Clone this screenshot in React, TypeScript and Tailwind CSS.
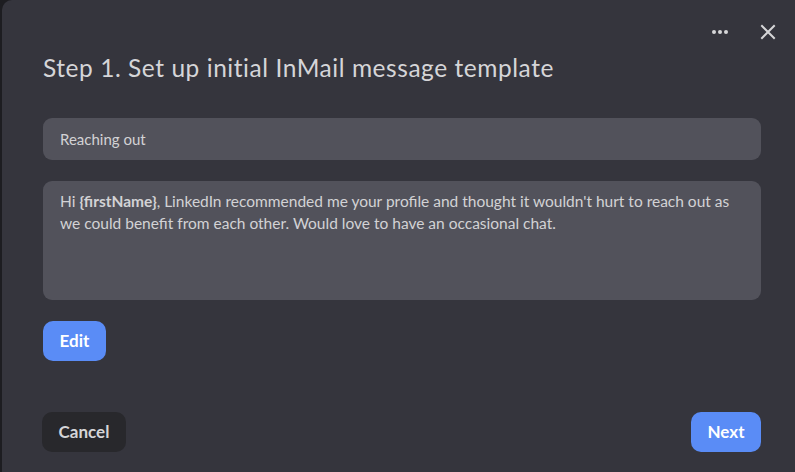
import React from "react";

// Icons
const DotsIcon = () => (
  <svg width="18" height="6" viewBox="0 0 18 6" fill="#d6d6d8">
    <circle cx="3" cy="3" r="2" />
    <circle cx="9" cy="3" r="2" />
    <circle cx="15" cy="3" r="2" />
  </svg>
);

const CloseIcon = () => (
  <svg width="16" height="16" viewBox="0 0 16 16" stroke="#d6d6d8" strokeWidth="2" strokeLinecap="square">
    <path d="M2 2 L14 14 M14 2 L2 14" />
  </svg>
);

const Button = ({
  label,
  className,
}: {
  label: string;
  className: string;
}) => (
  <button
    className={`h-[40px] rounded-[10px] text-[17px] font-bold ${className}`}
  >
    {label}
  </button>
);

export default function App() {
  return (
    <div
      className="w-[795px] h-[472px] bg-[#1d1d21] overflow-hidden"
      style={{ fontFamily: "Lato, 'Noto Sans', sans-serif" }}
    >
      <div className="ml-[2px] h-full rounded-tl-[10px] bg-[#35353d] flex flex-col pl-[41px] pr-[34px]">
        <div className="flex justify-end items-center gap-[31px] h-[66px] -mr-[15px] pb-[2px]">
          <DotsIcon />
          <CloseIcon />
        </div>

        <h1 className="text-[24.5px] leading-[30px] tracking-[0.55px] text-[#d5d5d8] -mt-[13px]">
          Step 1. Set up initial InMail message template
        </h1>

        <div className="mt-[35px] h-[42px] rounded-[9px] bg-[#52525b] flex items-center px-[17px] text-[15px] text-[#d2d2d5]">
          Reaching out
        </div>

        <div className="mt-[21px] h-[119px] rounded-[9px] bg-[#52525b] pl-[17px] pr-[20px] pt-[9px] text-[15.5px] leading-[22px] text-[#d2d2d5]">
          Hi <span className="font-bold">{"{firstName}"}</span>, LinkedIn
          recommended me your profile and thought it wouldn't hurt to reach out
          as we could benefit from each other. Would love to have an occasional
          chat.
        </div>

        <div className="mt-[21px]">
          <Button label="Edit" className="w-[63px] bg-[#5a8cf6] text-white" />
        </div>

        <div className="mt-[51px] flex justify-between">
          <Button
            label="Cancel"
            className="w-[84px] -ml-[1px] bg-[#28282c] text-[#d5d5d8]"
          />
          <Button label="Next" className="w-[70px] bg-[#5a8cf6] text-white" />
        </div>
      </div>
    </div>
  );
}
